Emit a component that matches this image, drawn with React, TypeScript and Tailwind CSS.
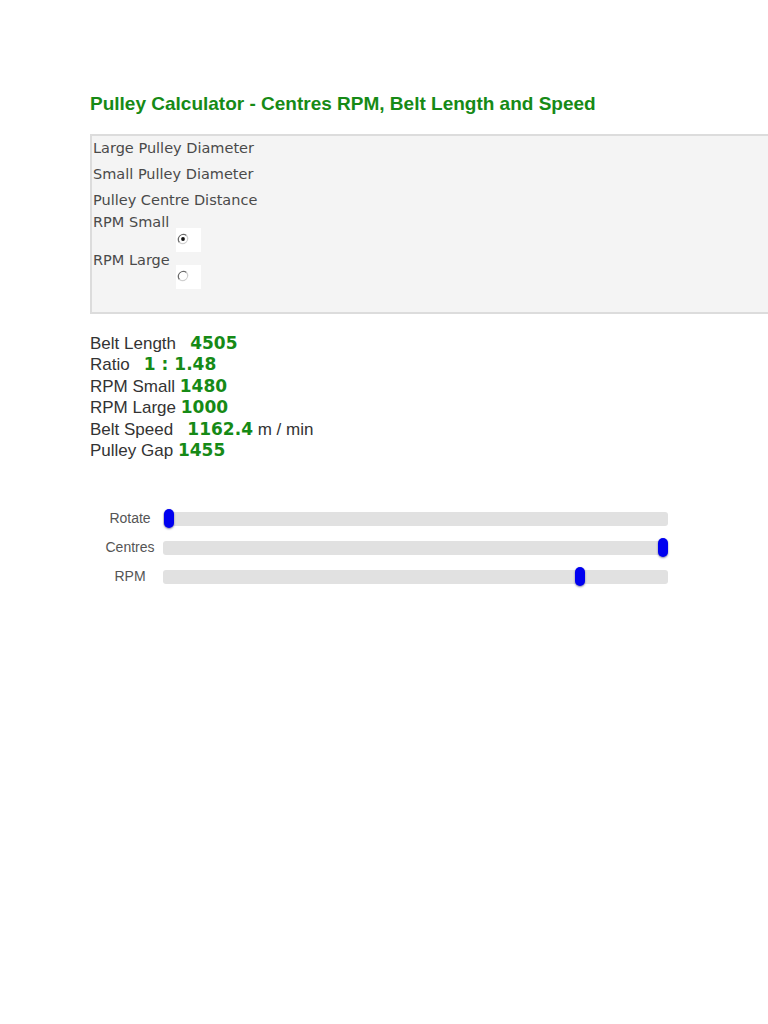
import React from 'react';

const green = 'text-[#168a16]';

function Radio({ checked }: { checked?: boolean }) {
  return (
    <div className="ml-[83px] h-[24px] w-[25px] bg-white">
      <svg width="25" height="24" viewBox="0 0 25 24">
        {/* sunken radio: dark upper-left, light lower-right */}
        <path d="M3.5 14.5 A5 5 0 0 1 10.5 7.5" fill="none" stroke="#6b6b6b" strokeWidth="1.3" />
        <path d="M10.5 7.5 A5 5 0 0 1 3.5 14.5" fill="none" stroke="#d0d0d0" strokeWidth="1.3" />
        <circle cx="7" cy="11" r="3.8" fill="white" />
        {checked && <circle cx="7" cy="11" r="1.9" fill="#111" />}
      </svg>
    </div>
  );
}

function Result({ label, value, gap = 1, unit }: { label: string; value: string; gap?: number; unit?: string }) {
  return (
    <div className="whitespace-pre">
      <span>{label}</span>
      <span>{'\u00a0'.repeat(gap)}</span>
      <span className={`font-['DejaVu_Sans',sans-serif] font-bold ${green}`}>{value}</span>
      {unit && <span> {unit}</span>}
    </div>
  );
}

function Slider({ label, thumbLeft }: { label: string; thumbLeft: number }) {
  return (
    <div className="flex h-[29px] items-center">
      <div className="w-[66px] text-center text-[14px] text-[#555]">{label}</div>
      <div className="relative h-[14px] w-[505px] rounded-[3px] bg-[#e1e1e1]">
        <div
          className="absolute top-[-2.5px] h-[19px] w-[10px] rounded-full bg-[#0000f0] shadow-[0_1px_2px_rgba(0,0,80,0.5)]"
          style={{ left: thumbLeft }}
        />
      </div>
    </div>
  );
}

export default function App() {
  return (
    <div className="min-h-[1024px] w-full overflow-hidden bg-white font-['Liberation_Sans',Arial,sans-serif]">
      <div className="pl-[90px] pt-[92px]">
        <h1 className={`text-[19px] font-bold leading-[24px] ${green}`}>
          Pulley Calculator - Centres RPM, Belt Length and Speed
        </h1>

        {/* input panel */}
        <div className="mt-[18px] w-[720px] border-2 border-[#dcdcdc] bg-[#f4f4f4] pb-[23px] pl-[1px] pt-[4px] font-['DejaVu_Sans',Verdana,sans-serif] text-[14.5px] leading-[16px] text-[#4a4a4a]">
          <div className="mb-[10px]">Large Pulley Diameter</div>
          <div className="mb-[10px]">Small Pulley Diameter</div>
          <div className="mb-[6px]">Pulley Centre Distance</div>
          <div className="-mb-[2px]">RPM Small</div>
          <Radio checked />
          <div className="-mb-[3px]">RPM Large</div>
          <Radio />
        </div>

        {/* results */}
        <div className="mt-[19px] text-[17px] leading-[21.4px] text-[#333]">
          <Result label="Belt Length" value="4505" gap={3} />
          <Result label="Ratio" value="1 : 1.48" gap={3} />
          <Result label="RPM Small" value="1480" />
          <Result label="RPM Large" value="1000" />
          <Result label="Belt Speed" value="1162.4" gap={3} unit="m / min" />
          <Result label="Pulley Gap" value="1455" />
        </div>

        <div className="ml-[7px] mt-[43px]">
          <Slider label="Rotate" thumbLeft={1} />
          <Slider label="Centres" thumbLeft={495} />
          <Slider label="RPM" thumbLeft={412} />
        </div>
      </div>
    </div>
  );
}
